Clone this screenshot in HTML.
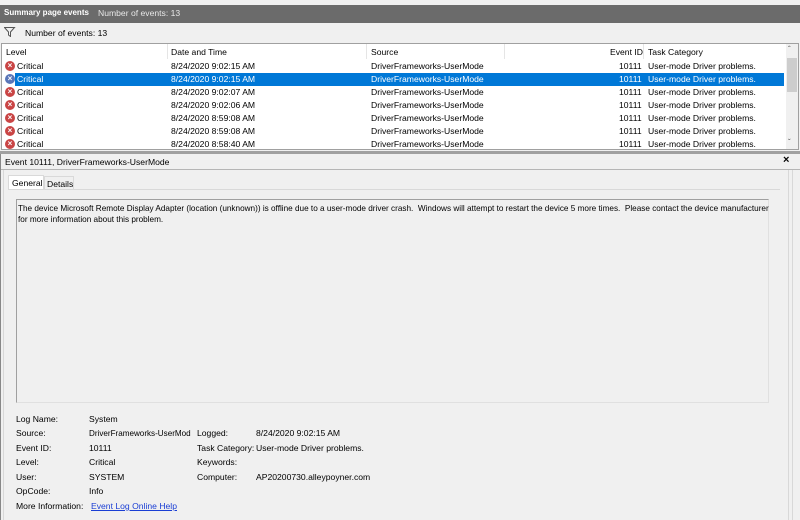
<!DOCTYPE html>
<html><head><style>
*{margin:0;padding:0;box-sizing:border-box}
body{width:800px;height:520px;background:#f0f0f0;font-family:"Liberation Sans",sans-serif;font-size:8.6px;color:#000;position:relative;overflow:hidden}
.a{position:absolute;white-space:nowrap}
.row{position:absolute;left:4px;width:780px;height:13px}
.row span{position:absolute;top:1px}
.ic{position:absolute;left:1px;top:1px;width:10px;height:10px;border-radius:50%;background:#c94545;color:#fff;font-size:8px;line-height:10px;text-align:center;font-weight:bold}
.sel{background:#0078d7;color:#fff}
</style></head><body>
<div class="a" style="left:0;top:5px;width:800px;height:18px;background:#6b6b6b"></div>
<div class="a" style="left:4px;top:8px;color:#fff;font-weight:bold;font-size:8px">Summary page events</div>
<div class="a" style="left:98px;top:8px;color:#e8e8e8">Number of events: 13</div>
<svg class="a" style="left:4px;top:27px" width="12" height="10"><path d="M0.5 0.5H10.5L6.5 5V9.5L4.5 8V5Z" fill="none" stroke="#555"/></svg>
<div class="a" style="left:25px;top:28px">Number of events: 13</div>
<div class="a" style="left:1px;top:43px;width:798px;height:107px;background:#fff;border:1px solid #a0a0a0"></div>
<div class="a" style="left:6px;top:47px">Level</div>
<div class="a" style="left:167px;top:44px;width:1px;height:15px;background:#e5e5e5"></div>
<div class="a" style="left:171px;top:47px">Date and Time</div>
<div class="a" style="left:366px;top:44px;width:1px;height:15px;background:#e5e5e5"></div>
<div class="a" style="left:371px;top:47px">Source</div>
<div class="a" style="left:504px;top:44px;width:1px;height:15px;background:#e5e5e5"></div>
<div class="a" style="left:610px;top:47px">Event ID</div>
<div class="a" style="left:643px;top:44px;width:1px;height:15px;background:#e5e5e5"></div>
<div class="a" style="left:648px;top:47px">Task Category</div>
<div class="a" style="left:786px;top:44px;width:12px;height:105px;background:#f0f0f0"></div>
<div class="a" style="left:787px;top:58px;width:10px;height:34px;background:#cdcdcd"></div>
<div class="a" style="left:788px;top:45px;font-size:8px;color:#555">&#710;</div>
<div class="a" style="left:788px;top:138px;font-size:8px;color:#555">&#711;</div>

<div class="row" style="top:60px"><div class="ic">×</div><span style="left:13px">Critical</span><span style="left:167px">8/24/2020 9:02:15 AM</span><span style="left:367px">DriverFrameworks-UserMode</span><span style="left:615px">10111</span><span style="left:644px">User-mode Driver problems.</span></div>
<div class="row sel" style="top:73px;left:15px;width:769px"></div>
<div class="row" style="top:73px;color:#fff"><div class="ic" style="background:#5a76b8">×</div><span style="left:13px">Critical</span><span style="left:167px">8/24/2020 9:02:15 AM</span><span style="left:367px">DriverFrameworks-UserMode</span><span style="left:615px">10111</span><span style="left:644px">User-mode Driver problems.</span></div>
<div class="row" style="top:86px"><div class="ic">×</div><span style="left:13px">Critical</span><span style="left:167px">8/24/2020 9:02:07 AM</span><span style="left:367px">DriverFrameworks-UserMode</span><span style="left:615px">10111</span><span style="left:644px">User-mode Driver problems.</span></div>
<div class="row" style="top:99px"><div class="ic">×</div><span style="left:13px">Critical</span><span style="left:167px">8/24/2020 9:02:06 AM</span><span style="left:367px">DriverFrameworks-UserMode</span><span style="left:615px">10111</span><span style="left:644px">User-mode Driver problems.</span></div>
<div class="row" style="top:112px"><div class="ic">×</div><span style="left:13px">Critical</span><span style="left:167px">8/24/2020 8:59:08 AM</span><span style="left:367px">DriverFrameworks-UserMode</span><span style="left:615px">10111</span><span style="left:644px">User-mode Driver problems.</span></div>
<div class="row" style="top:125px"><div class="ic">×</div><span style="left:13px">Critical</span><span style="left:167px">8/24/2020 8:59:08 AM</span><span style="left:367px">DriverFrameworks-UserMode</span><span style="left:615px">10111</span><span style="left:644px">User-mode Driver problems.</span></div>
<div class="row" style="top:138px;height:11px;overflow:hidden"><div class="ic">×</div><span style="left:13px">Critical</span><span style="left:167px">8/24/2020 8:58:40 AM</span><span style="left:367px">DriverFrameworks-UserMode</span><span style="left:615px">10111</span><span style="left:644px">User-mode Driver problems.</span></div>

<div class="a" style="left:0;top:151px;width:800px;height:3px;background:#a0a0a0"></div>
<div class="a" style="left:0;top:154px;width:800px;height:16px;background:#f0f0f0;border-bottom:1px solid #b5b5b5"></div>
<div class="a" style="left:5px;top:157px">Event 10111, DriverFrameworks-UserMode</div>
<div class="a" style="left:783px;top:154px;font-size:11px;font-weight:bold">×</div>
<div class="a" style="left:0;top:154px;width:1px;height:366px;background:#888"></div>
<div class="a" style="left:3px;top:170px;width:1px;height:350px;background:#d8d8d8"></div>
<div class="a" style="left:788px;top:170px;width:1px;height:350px;background:#d8d8d8"></div>
<div class="a" style="left:792px;top:170px;width:1px;height:350px;background:#d8d8d8"></div>
<div class="a" style="left:8px;top:175px;width:36px;height:15px;background:#fff;border:1px solid #d9d9d9;border-bottom:none"></div>
<div class="a" style="left:12px;top:178px">General</div>
<div class="a" style="left:44px;top:176px;width:30px;height:14px;border:1px solid #d9d9d9;border-bottom:none"></div>
<div class="a" style="left:47px;top:179px">Details</div>
<div class="a" style="left:8px;top:189px;width:772px;height:1px;background:#d9d9d9"></div>
<div class="a" style="left:16px;top:199px;width:753px;height:204px;border:1px solid #a0a0a0;border-right-color:#e0e0e0;border-bottom-color:#e0e0e0"></div>
<div class="a" style="left:18px;top:203px;font-size:8.2px;line-height:11px">The device Microsoft Remote Display Adapter (location (unknown)) is offline due to a user-mode driver crash.&nbsp; Windows will attempt to restart the device 5 more times.&nbsp; Please contact the device manufacturer<br>for more information about this problem.</div>

<div class="a" style="left:16px;top:414px">Log Name:</div><div class="a" style="left:89px;top:414px">System</div>
<div class="a" style="left:16px;top:428px">Source:</div><div class="a" style="left:89px;top:429px;font-size:8.1px">DriverFrameworks-UserMod</div><div class="a" style="left:197px;top:428px">Logged:</div><div class="a" style="left:256px;top:428px">8/24/2020 9:02:15 AM</div>
<div class="a" style="left:16px;top:443px">Event ID:</div><div class="a" style="left:89px;top:443px">10111</div><div class="a" style="left:197px;top:443px">Task Category:</div><div class="a" style="left:256px;top:443px">User-mode Driver problems.</div>
<div class="a" style="left:16px;top:457px">Level:</div><div class="a" style="left:89px;top:457px">Critical</div><div class="a" style="left:197px;top:457px">Keywords:</div>
<div class="a" style="left:16px;top:472px">User:</div><div class="a" style="left:89px;top:472px">SYSTEM</div><div class="a" style="left:197px;top:472px">Computer:</div><div class="a" style="left:256px;top:472px">AP20200730.alleypoyner.com</div>
<div class="a" style="left:16px;top:486px">OpCode:</div><div class="a" style="left:89px;top:486px">Info</div>
<div class="a" style="left:16px;top:501px">More Information:</div><div class="a" style="left:91px;top:501px;color:#1a3ed4;text-decoration:underline">Event Log Online Help</div>
</body></html>
